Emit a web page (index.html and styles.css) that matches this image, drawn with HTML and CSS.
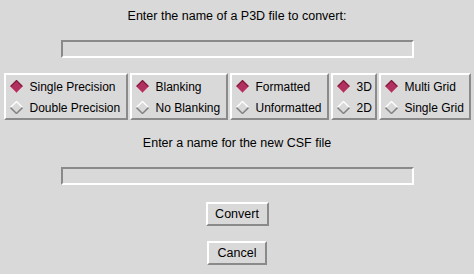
FILE: index.html
```html
<!DOCTYPE html>
<html lang="en">
<head>
    <meta charset="UTF-8">
    <title>P3D to CSF</title>
    <link rel="stylesheet" href="styles.css">
</head>
<body>
    <div class="dialog">
        <div class="label first">Enter the name of a P3D file to convert:</div>
        <div class="entry"></div>

        <div class="options">
            <div class="group precision">
                <div class="radio on"><span class="dot"></span>Single Precision</div>
                <div class="radio"><span class="dot"></span>Double Precision</div>
            </div>
            <div class="group blanking">
                <div class="radio on"><span class="dot"></span>Blanking</div>
                <div class="radio"><span class="dot"></span>No Blanking</div>
            </div>
            <div class="group format">
                <div class="radio on"><span class="dot"></span>Formatted</div>
                <div class="radio"><span class="dot"></span>Unformatted</div>
            </div>
            <div class="group dims">
                <div class="radio on"><span class="dot"></span>3D</div>
                <div class="radio"><span class="dot"></span>2D</div>
            </div>
            <div class="group grid">
                <div class="radio on"><span class="dot"></span>Multi Grid</div>
                <div class="radio"><span class="dot"></span>Single Grid</div>
            </div>
        </div>

        <div class="label second">Enter a name for the new CSF file</div>
        <div class="entry"></div>

        <button class="btn convert">Convert</button>
        <button class="btn cancel">Cancel</button>
    </div>
</body>
</html>
```

FILE: styles.css
```css
body {
    margin: 0;
    background-color: #d9d9d9;
    font-family: "Liberation Sans", Arial, sans-serif;
    font-size: 12.5px;
    color: #000;
}
.dialog {
    width: 474px;
    height: 274px;
    display: flex;
    flex-direction: column;
    align-items: center;
}
.label {
    line-height: 20px;
    height: 20px;
}
.label.first {
    margin-top: 6px;
}
.label.second {
    margin-top: 13px;
}
.entry {
    box-sizing: border-box;
    width: 353px;
    height: 18px;
    margin-top: 14px;
    border: 2px solid;
    border-color: #8a8a8a #ffffff #ffffff #8a8a8a;
    background-color: #d9d9d9;
}
.options {
    display: flex;
    gap: 2px;
    margin-top: 15px;
    font-size: 12px;
}
.group {
    box-sizing: border-box;
    height: 47px;
    padding: 1px 0 0 3px;
    border: 2px solid;
    border-color: #ffffff #8a8a8a #8a8a8a #ffffff;
    flex: none;
}
.precision { width: 124px; }
.blanking { width: 98px; }
.format { width: 99px; }
.dims { width: 46px; }
.grid { width: 92px; }
.radio {
    display: flex;
    align-items: center;
    height: 21px;
    white-space: nowrap;
}
.dot {
    flex: none;
    width: 13px;
    height: 13px;
    margin: 0 7px 0 1px;
    background: url("data:image/svg+xml,%3Csvg xmlns='http://www.w3.org/2000/svg' width='13' height='13'%3E%3Cpolygon points='6.5,0.5 12.5,6.5 6.5,12.5 0.5,6.5' fill='none' stroke='%23ffffff' stroke-width='1.4'/%3E%3Cpolyline points='0.5,6.5 6.5,12.5 12.5,6.5' fill='none' stroke='%23828282' stroke-width='1.6'/%3E%3C/svg%3E") no-repeat;
}
.radio.on .dot {
    background: url("data:image/svg+xml,%3Csvg xmlns='http://www.w3.org/2000/svg' width='13' height='13'%3E%3Cpolygon points='6.5,0.5 12.5,6.5 6.5,12.5 0.5,6.5' fill='%23b03060'/%3E%3Cpolyline points='0.5,6.5 6.5,0.5 12.5,6.5' fill='none' stroke='%23801838' stroke-width='1.2'/%3E%3Cpolyline points='0.5,6.5 6.5,12.5 12.5,6.5' fill='none' stroke='%23d06888' stroke-width='1'/%3E%3C/svg%3E") no-repeat;
}
.btn {
    box-sizing: border-box;
    font-family: "Liberation Sans", Arial, sans-serif;
    font-size: 12.5px;
    color: #000;
    background-color: #d9d9d9;
    border: 2px solid;
    border-color: #ffffff #8a8a8a #8a8a8a #ffffff;
    padding: 0;
    height: 24px;
}
.convert {
    width: 63px;
    margin-top: 17px;
}
.cancel {
    width: 60px;
    margin-top: 15px;
}
```
